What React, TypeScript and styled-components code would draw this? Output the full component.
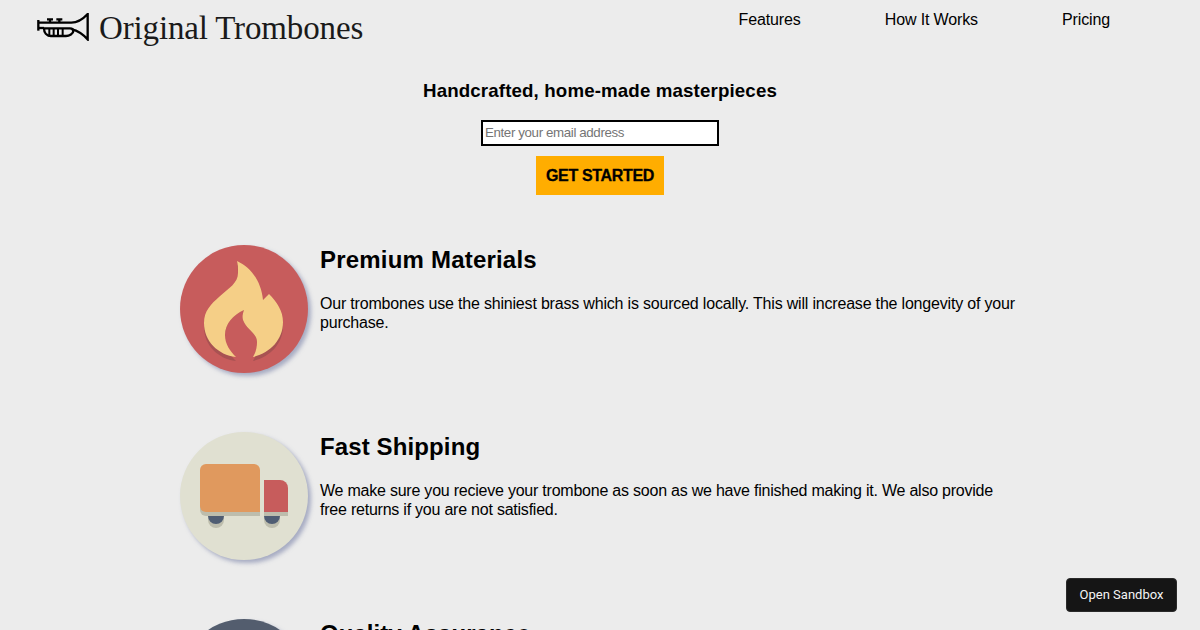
import React from "react";
import styled, { createGlobalStyle } from "styled-components";

const Global = createGlobalStyle`
  html, body { margin: 0; padding: 0; height: 630px; overflow: hidden; background: #ececec; }
  body { font-family: "Liberation Sans", Arial, sans-serif; color: #000; font-size: 16px; }
`;

const Header = styled.header`
  display: flex;
  justify-content: space-between;
  align-items: flex-start;
  height: 80px;
  padding: 0 90px 0 37px;
`;
const Brand = styled.div`
  display: flex;
  align-items: center;
  gap: 10px;
  height: 54px;
`;
const BrandName = styled.span`
  font-family: "Liberation Serif", "Times New Roman", serif;
  font-size: 33px;
  letter-spacing: -0.15px;
  color: #1a1a1a;
  padding-top: 2px;
`;
const Nav = styled.nav`
  display: flex;
  gap: 84px;
  padding-top: 11px;
`;
const NavLink = styled.a`
  color: #000;
  font-size: 16px;
  line-height: 18px;
  letter-spacing: -0.13px;
  text-decoration: none;
`;
const Hero = styled.section`
  display: flex;
  flex-direction: column;
  align-items: center;
`;
const Tagline = styled.h2`
  margin: 0;
  font-size: 18.72px;
  line-height: 21px;
  font-weight: 700;
  letter-spacing: 0.135px;
`;
const EmailInput = styled.input`
  box-sizing: border-box;
  width: 238px;
  height: 26px;
  margin-top: 19px;
  padding: 0 2px 2px;
  border: 2px solid #000;
  border-radius: 0;
  background: #fff;
  font-family: "Liberation Sans", Arial, sans-serif;
  font-size: 13.33px;
  letter-spacing: -0.38px;
  outline: none;
`;
const Cta = styled.button`
  width: 128px;
  height: 39px;
  margin-top: 10px;
  padding: 0;
  border: 0;
  background: #ffad00;
  color: #000;
  font-family: "Liberation Sans", Arial, sans-serif;
  font-size: 16px;
  font-weight: 700;
  letter-spacing: -0.34px;
  -webkit-text-stroke: 0.3px #000;
`;
const Features = styled.section`
  width: 840px;
  margin: 50px auto 0;
  display: flex;
  flex-direction: column;
  gap: 59px;
`;
const Feature = styled.article`
  display: flex;
  gap: 12px;
  min-height: 128px;
`;
const Badge = styled.div<{ $bg: string }>`
  flex: none;
  width: 128px;
  height: 128px;
  border-radius: 50%;
  background: ${(p) => p.$bg};
  box-shadow: 3px 3px 4px rgba(110, 118, 160, 0.55);
  overflow: hidden;
`;
const Body = styled.div`
  flex: 1;
  padding-top: 1px;
`;
const Title = styled.h3<{ $tracking: string }>`
  margin: 0;
  font-size: 24px;
  line-height: 28px;
  font-weight: 700;
  letter-spacing: ${(p) => p.$tracking};
`;
const Text = styled.p<{ $tracking: string }>`
  margin: 20px 0 0;
  font-size: 16px;
  line-height: 19px;
  letter-spacing: ${(p) => p.$tracking};
`;
const Sandbox = styled.a`
  position: fixed;
  right: 23px;
  bottom: 18px;
  box-sizing: border-box;
  width: 111px;
  height: 34px;
  padding-bottom: 2px;
  display: flex;
  align-items: center;
  justify-content: center;
  background: #151515;
  border: 1px solid #2a2a2a;
  border-radius: 4px;
  color: #f4f4f4;
  font-family: Roboto, "Liberation Sans", sans-serif;
  font-size: 13px;
`;

const Trumpet = () => (
  <svg width="52" height="28" viewBox="9 9 156 84" fill="none" stroke="#000" strokeWidth="7" aria-hidden>
    <path d="M13 30v32" />
    <path d="M13 38H112C130 38 148 26 161 12V88C148 74 132 62 114 58" />
    <path d="M13 54H30" />
    <path d="M30 55H108c7 0 10 4 10 8 0 8-12 15-22 15H50C38 78 30 68 30 55z" />
    <path d="M48 38V28M39 28H57M76 38V28M67 28H85" />
    <path d="M46 55V80M59 55V80M72 55V78M86 55V78" strokeWidth="6" />
  </svg>
);

const flame =
  "M57 16C70 22 81 35 83 55L89 49C97 57 103 66 103 77C103 95 90 108 73 112C76 107 77 102 77 97C77 88 66 84 63 75C62 71 63 68 64 65C53 70 45 79 45 90C45 99 50 106 56 112C38 110 24 96 24 78C24 66 31 59 39 52C49 43 58 38 58 28C58 23 58 20 57 16Z";

const Fire = () => (
  <svg width="128" height="128" viewBox="0 0 128 128" aria-hidden>
    <path d={flame} fill="#a85252" transform="translate(0 4)" />
    <path d="M45 90C45 99 50 106 56 112L60 116H70L73 112C76 107 77 102 77 97C77 88 66 84 63 75C62 71 63 68 64 65C53 70 45 79 45 90Z" fill="#c75c5c" />
    <path d={flame} fill="#f5cf87" />
  </svg>
);

const Truck = () => (
  <svg width="128" height="128" viewBox="0 0 128 128" aria-hidden>
    <circle cx="36" cy="88" r="8" fill="#bdbdad" />
    <circle cx="92" cy="88" r="8" fill="#bdbdad" />
    <circle cx="36" cy="84" r="8" fill="#4f5d73" />
    <circle cx="92" cy="84" r="8" fill="#4f5d73" />
    <path d="M20 40h60v44H26a6 6 0 0 1-6-6z" fill="#bdbdad" />
    <path d="M84 60h24v24H84z" fill="#bdbdad" />
    <path d="M26 32h48a6 6 0 0 1 6 6v42H26a6 6 0 0 1-6-6V38a6 6 0 0 1 6-6z" fill="#e0995e" />
    <path d="M84 48h16a8 8 0 0 1 8 8v24H84z" fill="#c75c5c" />
  </svg>
);

export default function App() {
  return (
    <>
      <Global />
      <Header>
        <Brand>
          <Trumpet />
          <BrandName>Original Trombones</BrandName>
        </Brand>
        <Nav>
          <NavLink>Features</NavLink>
          <NavLink>How It Works</NavLink>
          <NavLink>Pricing</NavLink>
        </Nav>
      </Header>
      <Hero>
        <Tagline>Handcrafted, home-made masterpieces</Tagline>
        <EmailInput placeholder="Enter your email address" />
        <Cta>GET STARTED</Cta>
      </Hero>
      <Features>
        <Feature>
          <Badge $bg="#c75c5c"><Fire /></Badge>
          <Body>
            <Title $tracking="0.2px">Premium Materials</Title>
            <Text $tracking="-0.19px">Our trombones use the shiniest brass which is sourced locally. This will increase the longevity of your purchase.</Text>
          </Body>
        </Feature>
        <Feature>
          <Badge $bg="#e0e0d1"><Truck /></Badge>
          <Body>
            <Title $tracking="0.12px">Fast Shipping</Title>
            <Text $tracking="-0.226px">We make sure you recieve your trombone as soon as we have finished making it. We also provide free returns if you are not satisfied.</Text>
          </Body>
        </Feature>
        <Feature>
          <Badge $bg="#535d6e" />
          <Body>
            <Title $tracking="0.03px">Quality Assurance</Title>
          </Body>
        </Feature>
      </Features>
      <Sandbox>Open Sandbox</Sandbox>
    </>
  );
}
